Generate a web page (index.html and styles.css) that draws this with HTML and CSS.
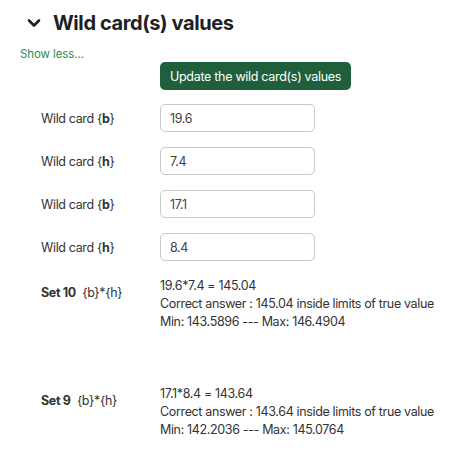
FILE: index.html
```html
<!DOCTYPE html>
<html>
<head>
<title>Wild card(s) values</title>
<meta charset="UTF-8">
<meta name="viewport" content="width=device-width, initial-scale=1.0">
<link rel="stylesheet" href="styles.css">
</head>
<body>

<!-- *********************************************************
WILD CARDS
********************************************************** -->

<div id="wildcards">
	<h3 class="section-head">
		<svg class="chevron" width="14" height="10" viewBox="0 0 14 10"><path d="M2 2.5 L7 7.5 L12 2.5" fill="none" stroke="#1d2125" stroke-width="2.6" stroke-linecap="round" stroke-linejoin="round"/></svg>
		<span>Wild card(s) values</span>
	</h3>
	<a class="show-less" href="#">Show less...</a>

	<div class="row first">
		<div class="label"></div>
		<button class="btn-update">Update the wild card(s) values</button>
	</div>

	<div class="row">
		<label class="label">Wild card {<b>b</b>}</label>
		<input class="field" type="text" value="19.6">
	</div>
	<div class="row">
		<label class="label">Wild card {<b>h</b>}</label>
		<input class="field" type="text" value="7.4">
	</div>
	<div class="row">
		<label class="label">Wild card {<b>b</b>}</label>
		<input class="field" type="text" value="17.1">
	</div>
	<div class="row">
		<label class="label">Wild card {<b>h</b>}</label>
		<input class="field" type="text" value="8.4">
	</div>

	<div class="row set">
		<div class="label"><b>Set 10</b>&nbsp; {b}*{h}</div>
		<div class="result">
			19.6*7.4 = 145.04<br>
			Correct answer : 145.04 inside limits of true value<br>
			Min: 143.5896 --- Max: 146.4904
		</div>
	</div>
	<div class="row set last">
		<div class="label"><b>Set 9</b>&nbsp; {b}*{h}</div>
		<div class="result">
			17.1*8.4 = 143.64<br>
			Correct answer : 143.64 inside limits of true value<br>
			Min: 142.2036 --- Max: 145.0764
		</div>
	</div>
</div>

</body>
</html>
```

FILE: styles.css
```css
body{
	margin: 0px;
	font-family: Inter, "Noto Sans", sans-serif;
	font-size: 12.5px;
	letter-spacing: -0.35px;
	color: #1d2125;
	background: #fff;
}

/*********************************************************
WILD CARDS
**********************************************************/

#wildcards{
	padding: 9px 0 0 20px;
}

.section-head{
	display: flex;
	align-items: center;
	margin: 0;
	font-size: 20px;
	font-weight: 700;
	letter-spacing: -0.4px;
	line-height: 28px;
}

.chevron{
	margin-left: 7px;
	margin-right: 12px;
}

.show-less{
	display: block;
	margin-top: 9px;
	color: #2e8b57;
	font-size: 11.5px;
	letter-spacing: -0.1px;
	line-height: 16px;
	text-decoration: none;
}

.row{
	display: flex;
	align-items: center;
	margin-bottom: 15px;
}

.row.first{
	margin-top: 0;
	margin-bottom: 14px;
}

.label{
	width: 119px;
	padding-left: 21px;
	color: #333;
}

.btn-update{
	background: #1f5f3c;
	color: #fff;
	border: none;
	border-radius: 5px;
	height: 28px;
	padding: 0 10px;
	font-family: inherit;
	font-size: 12.5px;
	letter-spacing: -0.3px;
}

.field{
	box-sizing: border-box;
	width: 155px;
	height: 28px;
	border: 1px solid #c8c8c8;
	border-radius: 5px;
	padding: 0 9px;
	font-family: inherit;
	font-size: 12.5px;
	letter-spacing: -0.35px;
	color: #444;
}

.set{
	align-items: flex-start;
	margin-top: 16px;
	margin-bottom: 54px;
}

.set.last{
	margin-bottom: 0;
}

.set .label{
	padding-top: 8px;
}

.result{
	line-height: 18px;
	color: #333;
}
```
